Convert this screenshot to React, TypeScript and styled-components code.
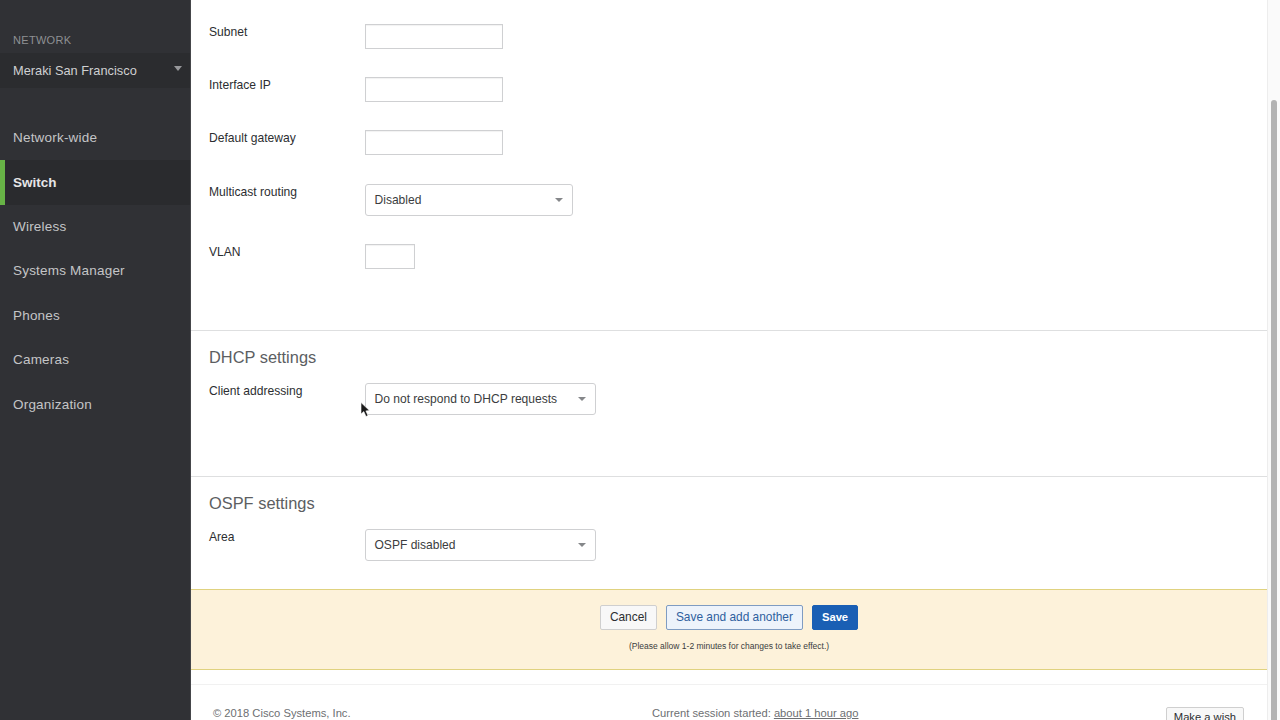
import styled, { createGlobalStyle } from "styled-components"

const GlobalStyle = createGlobalStyle`
  html, body {
    margin: 0;
    height: 100%;
    overflow: hidden;
    background: #fff;
  }
  body {
    font-family: "Liberation Sans", Arial, sans-serif;
    color: #26282b;
  }
  * {
    box-sizing: border-box;
  }
`

const Page = styled.div`
  position: relative;
  display: flex;
  width: 1280px;
  height: 720px;
  overflow: hidden;
`

const Sidebar = styled.nav`
  flex: 0 0 191px;
  padding-top: 33px;
  background: #303135;
  border-right: 1px solid #45464a;
`

const NetworkLabel = styled.div`
  padding-left: 13px;
  font-size: 11px;
  line-height: 14px;
  letter-spacing: 0.3px;
  color: #8e9093;
`

const NetworkPicker = styled.div`
  display: flex;
  align-items: center;
  justify-content: space-between;
  height: 35px;
  margin: 6px 0 28px;
  padding: 0 8px 1px 13px;
  font-size: 12.8px;
  color: #cfd0d2;
  background: #2b2c2f;
`

const PickerCaret = styled.span`
  width: 0;
  height: 0;
  margin-bottom: 3px;
  border-left: 4.5px solid transparent;
  border-right: 4.5px solid transparent;
  border-top: 5px solid #97989b;
`

const NavItem = styled.div<{ $active?: boolean }>`
  display: flex;
  align-items: center;
  height: 44.4px;
  padding: 0 0 1px ${(p) => (p.$active ? "8px" : "13px")};
  font-size: 13.5px;
  font-weight: ${(p) => (p.$active ? 700 : 400)};
  letter-spacing: ${(p) => (p.$active ? "0" : "0.2px")};
  color: ${(p) => (p.$active ? "#e6e6e7" : "#c4c5c7")};
  background: ${(p) => (p.$active ? "#2a2b2e" : "transparent")};
  border-left: ${(p) => (p.$active ? "5px solid #67b346" : "none")};
`

const Main = styled.main`
  flex: 1;
  min-width: 0;
  margin-top: -1px;
  padding-top: 24px;
  border-top: 1px solid #f4f4f4;
`

const Section = styled.section<{ $height: number; $flat?: boolean }>`
  height: ${(p) => p.$height}px;
  padding: 0 18px;
  border-bottom: ${(p) => (p.$flat ? "none" : "1px solid #dedfe0")};
`

const SectionTitle = styled.h2`
  margin: 0 0 16px;
  padding-top: 16px;
  font-size: 16.4px;
  line-height: 20px;
  font-weight: 400;
  color: #5c5e62;
`

const Row = styled.div<{ $after?: number }>`
  display: flex;
  margin-bottom: ${(p) => p.$after ?? 0}px;
`

const Label = styled.label`
  flex: 0 0 156px;
  padding-top: 1px;
  font-size: 12.1px;
  line-height: 15px;
  color: #2c2e31;
`

const TextInput = styled.div<{ $width: number }>`
  width: ${(p) => p.$width}px;
  height: 25px;
  background: #fff;
  border: 1px solid #cfd0d2;
  box-shadow: inset 0 1px 1px #f2f2f2;
`

const Select = styled.div<{ $width: number }>`
  display: flex;
  align-items: center;
  justify-content: space-between;
  width: ${(p) => p.$width}px;
  height: 32px;
  padding: 0 9px 1px 8.5px;
  font-size: 12.05px;
  color: #3b3d40;
  background: #fff;
  border: 1px solid #cfd0d2;
  border-radius: 3px;
`

const SelectCaret = styled.span`
  width: 0;
  height: 0;
  border-left: 4px solid transparent;
  border-right: 4px solid transparent;
  border-top: 4px solid #85878a;
`

const SaveBar = styled.div`
  height: 81px;
  padding-top: 15px;
  text-align: center;
  background: #fdf2da;
  border-top: 1px solid #e0d27f;
  border-bottom: 1px solid #e0d27f;
`

const ButtonRow = styled.div`
  display: flex;
  justify-content: center;
  gap: 9px;
`

const Button = styled.button<{ $kind?: "primary" | "secondary" }>`
  height: 25px;
  padding: 0 9px 2px;
  font-family: inherit;
  font-size: ${(p) => (p.$kind === "primary" ? "11.2px" : "11.9px")};
  font-weight: ${(p) => (p.$kind === "primary" ? 700 : 400)};
  color: ${(p) =>
    p.$kind === "primary" ? "#fff" : p.$kind === "secondary" ? "#2f5f9e" : "#2c2e31"};
  background: ${(p) =>
    p.$kind === "primary" ? "#1a5fb4" : p.$kind === "secondary" ? "#edf3fb" : "#f8f8f8"};
  border: 1px solid
    ${(p) =>
      p.$kind === "primary" ? "#1a5fb4" : p.$kind === "secondary" ? "#7f9cc2" : "#cfcfcf"};
  border-radius: 2px;
`

const SaveNote = styled.p`
  margin: 10px 0 0;
  font-size: 8.5px;
  line-height: 12px;
  color: #3b3d40;
`

const Footer = styled.footer`
  display: flex;
  align-items: flex-start;
  height: 36px;
  margin-top: 14px;
  padding: 21px 23px 0 22px;
  font-size: 11.2px;
  line-height: 14px;
  color: #6d6f72;
  border-top: 1px solid #f1f1f1;
`

const Copyright = styled.div`
  flex: 0 0 439px;
`

const Session = styled.div`
  flex: 1;
  white-space: nowrap;
`

const SessionLink = styled.a`
  text-decoration: underline;
`

const WishButton = styled.button`
  height: 19px;
  margin-top: 1px;
  padding: 0 7px;
  font-family: inherit;
  font-size: 11.2px;
  color: #2c2e31;
  background: #f8f8f8;
  border: 1px solid #cfcfcf;
  border-radius: 2px;
`

const ScrollTrack = styled.div`
  flex: 0 0 13px;
  padding: 100px 3px 0;
  background: #fafafa;
  border-left: 1px solid #ededed;
`

const ScrollThumb = styled.div`
  height: 640px;
  background: #b3b3b3;
  border-radius: 4px;
`

const Cursor = styled.svg`
  position: absolute;
  left: 360px;
  top: 402px;
`

export default function App() {
  const navItems = ["Network-wide", "Switch", "Wireless", "Systems Manager", "Phones", "Cameras", "Organization"]
  return (
    <Page>
      <GlobalStyle />
      <Sidebar>
        <NetworkLabel>NETWORK</NetworkLabel>
        <NetworkPicker>
          Meraki San Francisco
          <PickerCaret />
        </NetworkPicker>
        {navItems.map((item) => (
          <NavItem key={item} $active={item === "Switch"}>
            {item}
          </NavItem>
        ))}
      </Sidebar>
      <Main>
        <Section $height={307}>
          <Row $after={28}>
            <Label>Subnet</Label>
            <TextInput $width={138} />
          </Row>
          <Row $after={28}>
            <Label>Interface IP</Label>
            <TextInput $width={138} />
          </Row>
          <Row $after={29}>
            <Label>Default gateway</Label>
            <TextInput $width={138} />
          </Row>
          <Row $after={28}>
            <Label>Multicast routing</Label>
            <Select $width={208}>
              Disabled
              <SelectCaret />
            </Select>
          </Row>
          <Row>
            <Label>VLAN</Label>
            <TextInput $width={50} />
          </Row>
        </Section>
        <Section $height={146}>
          <SectionTitle>DHCP settings</SectionTitle>
          <Row>
            <Label>Client addressing</Label>
            <Select $width={231}>
              Do not respond to DHCP requests
              <SelectCaret />
            </Select>
          </Row>
        </Section>
        <Section $height={112} $flat>
          <SectionTitle>OSPF settings</SectionTitle>
          <Row>
            <Label>Area</Label>
            <Select $width={231}>
              OSPF disabled
              <SelectCaret />
            </Select>
          </Row>
        </Section>
        <SaveBar>
          <ButtonRow>
            <Button>Cancel</Button>
            <Button $kind="secondary">Save and add another</Button>
            <Button $kind="primary">Save</Button>
          </ButtonRow>
          <SaveNote>(Please allow 1-2 minutes for changes to take effect.)</SaveNote>
        </SaveBar>
        <Footer>
          <Copyright>© 2018 Cisco Systems, Inc.</Copyright>
          <Session>
            Current session started: <SessionLink>about 1 hour ago</SessionLink>
          </Session>
          <WishButton>Make a wish</WishButton>
        </Footer>
      </Main>
      <ScrollTrack>
        <ScrollThumb />
      </ScrollTrack>
      <Cursor width="12" height="16" viewBox="0 0 12 16">
        <path d="M1 0.5 L1 12 L3.8 9.6 L6 14.5 L8 13.6 L5.9 8.9 L9.4 8.6 Z" fill="#1a1a1a" stroke="#fff" strokeWidth="0.6" />
      </Cursor>
    </Page>
  )
}
